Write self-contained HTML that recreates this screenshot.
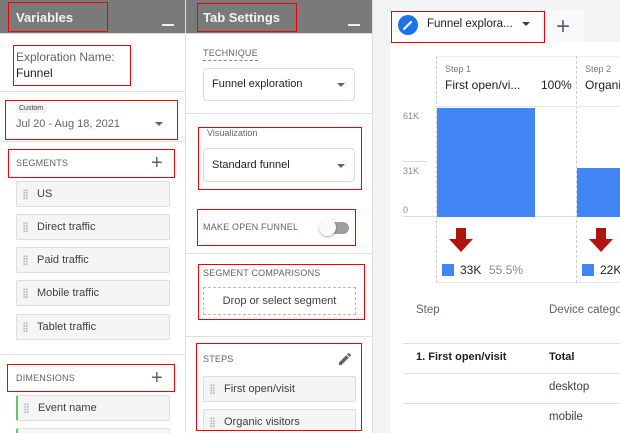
<!DOCTYPE html><html><head><style>
*{margin:0;padding:0;box-sizing:border-box}
html,body{width:620px;height:433px;overflow:hidden}
body{background:#fff;font-family:"Liberation Sans",Arial,sans-serif;position:relative;color:#202124}
.a{position:absolute}
.r{position:absolute;border:1.5px solid #e00}
.hd{background:#7a7a7a;height:34px;top:0;border-bottom:1px solid #ddd}
.ht{color:#f2f2f2;font-weight:bold;font-size:13px;top:10px}
.mn{width:12px;height:2px;background:#eee;top:24px}
.cap{font-size:9px;color:#5f6368;letter-spacing:.2px}
.div{height:1px;background:#e0e0e0}
.chip{position:absolute;background:#f5f5f5;border:1px solid #dedede;border-radius:2px;height:26px;font-size:11px;color:#3c4043;padding-left:20px;line-height:24px}
.chip:before{content:"";position:absolute;left:6px;top:7px;width:5px;height:11px;background:radial-gradient(circle,#bbb 0.9px,transparent 1.1px) 0 0/2.5px 2.6px}
.dd{position:absolute;border:1px solid #dadce0;border-radius:4px;font-size:11px;color:#202124;padding-left:8px}
.car{position:absolute;width:0;height:0;border-left:4px solid transparent;border-right:4px solid transparent;border-top:4px solid #5f6368}
.plus{position:absolute;font-size:20px;color:#5f6368;line-height:20px}
</style></head><body>
<div class="a hd" style="left:0;width:620px"></div>
<div class="a" style="left:185px;top:0;width:1px;height:433px;background:#e0e0e0"></div>
<div class="a" style="left:372px;top:0;width:1px;height:433px;background:#e0e0e0"></div>
<div class="a" style="left:373px;top:0;width:247px;height:433px;background:#f1f3f4"></div>
<div class="a" style="left:185px;top:0;width:1px;height:34px;background:#ddd"></div>
<div class="a ht" style="left:16px">Variables</div>
<div class="a mn" style="left:162px"></div>
<div class="r" style="left:8px;top:2px;width:100px;height:30px"></div>
<div class="a ht" style="left:203px">Tab Settings</div>
<div class="a mn" style="left:348px"></div>
<div class="r" style="left:197px;top:3px;width:100px;height:29px"></div>

<div class="a" style="left:16px;top:49px;font-size:12px;color:#5f6368;line-height:16px">Exploration Name:<br><span style="color:#202124">Funnel</span></div>
<div class="r" style="left:13px;top:45px;width:118px;height:41px"></div>
<div class="a div" style="left:0;top:91px;width:185px"></div>
<div class="a" style="left:16px;top:104px;font-size:7px;color:#3c4043;background:#f1f1f1;padding:1px 3px">Custom</div>
<div class="a" style="left:16px;top:118px;font-size:11px;color:#5f6368">Jul 20 - Aug 18, 2021</div>
<div class="car" style="left:155px;top:122px"></div>
<div class="r" style="left:5px;top:100px;width:173px;height:40px"></div>
<div class="a div" style="left:0;top:141px;width:185px"></div>
<div class="a cap" style="left:16px;top:158px">SEGMENTS</div>
<div class="plus" style="left:151px;top:153px">+</div>
<div class="r" style="left:8px;top:149px;width:167px;height:29px"></div>
<div class="chip" style="left:16px;top:181px;width:154px">US</div>
<div class="chip" style="left:16px;top:214px;width:154px">Direct traffic</div>
<div class="chip" style="left:16px;top:247px;width:154px">Paid traffic</div>
<div class="chip" style="left:16px;top:280px;width:154px">Mobile traffic</div>
<div class="chip" style="left:16px;top:314px;width:154px">Tablet traffic</div>
<div class="a div" style="left:0;top:354px;width:185px"></div>
<div class="a cap" style="left:16px;top:373px">DIMENSIONS</div>
<div class="plus" style="left:151px;top:368px">+</div>
<div class="r" style="left:7px;top:364px;width:168px;height:28px"></div>
<div class="chip" style="left:16px;top:395px;width:154px;border-left:2px solid #6ac06a">Event name</div>
<div class="chip" style="left:16px;top:428px;width:154px;border-left:2px solid #6ac06a"></div>

<div class="a cap" style="left:203px;top:48px;border-bottom:1px dashed #888;padding-bottom:2px">TECHNIQUE</div>
<div class="dd" style="left:203px;top:68px;width:152px;height:33px;line-height:31px">Funnel exploration</div>
<div class="car" style="left:337px;top:83px"></div>
<div class="a div" style="left:186px;top:113px;width:186px"></div>
<div class="a" style="left:207px;top:128px;font-size:9px;color:#5f6368">Visualization</div>
<div class="dd" style="left:203px;top:148px;width:152px;height:34px;line-height:32px">Standard funnel</div>
<div class="car" style="left:337px;top:164px"></div>
<div class="r" style="left:198px;top:127px;width:164px;height:63px"></div>
<div class="a cap" style="left:203px;top:222px">MAKE OPEN FUNNEL</div>
<div class="a" style="left:322px;top:222px;width:27px;height:12px;border-radius:6px;background:#9e9e9e"></div>
<div class="a" style="left:319px;top:219px;width:17px;height:17px;border-radius:50%;background:#fafafa;box-shadow:0 1px 2px rgba(0,0,0,.35)"></div>
<div class="r" style="left:197px;top:209px;width:159px;height:37px"></div>
<div class="a div" style="left:186px;top:253px;width:186px"></div>
<div class="a cap" style="left:203px;top:268px">SEGMENT COMPARISONS</div>
<div class="a" style="left:203px;top:287px;width:153px;height:28px;border:1px dashed #bbb;font-size:11px;color:#3c4043;text-align:center;line-height:26px">Drop or select segment</div>
<div class="r" style="left:198px;top:264px;width:167px;height:56px"></div>
<div class="a div" style="left:186px;top:336px;width:186px"></div>
<div class="a cap" style="left:203px;top:354px">STEPS</div>
<svg class="a" style="left:337px;top:351px" width="16" height="16" viewBox="0 0 24 24"><path d="M3 17.25V21h3.75L17.8 9.94l-3.75-3.75L3 17.25zM20.7 7.04a1 1 0 000-1.41l-2.34-2.34a1 1 0 00-1.41 0l-1.83 1.83 3.75 3.75 1.83-1.83z" fill="#5f6368"/></svg>
<div class="chip" style="left:203px;top:376px;width:153px">First open/visit</div>
<div class="chip" style="left:203px;top:409px;width:153px">Organic visitors</div>
<div class="r" style="left:196px;top:343px;width:166px;height:88px"></div>

<div class="a" style="left:390px;top:9px;width:152px;height:34px;background:#fff;border-radius:4px 4px 0 0"></div>
<div class="a" style="left:543px;top:9px;width:41px;height:34px;background:#f8f9fa;border-radius:4px 4px 0 0"></div>
<div class="a" style="left:390px;top:42px;width:230px;height:391px;background:#fff"></div>
<div class="a" style="left:398px;top:15px;width:20px;height:20px;border-radius:50%;background:#1a73e8"></div>
<svg class="a" style="left:402px;top:19px" width="12" height="12" viewBox="0 0 12 12"><path d="M2 10 L9 3" stroke="#fff" stroke-width="2.2" stroke-linecap="round"/></svg>
<div class="a" style="left:427px;top:18px;font-size:11.5px;color:#202124">Funnel explora...</div>
<div class="car" style="left:522px;top:22px;border-top-color:#3c4043"></div>
<div class="r" style="left:391px;top:11px;width:154px;height:32px"></div>
<div class="a" style="left:556px;top:13px;font-size:24px;color:#5f6368;font-weight:300">+</div>

<div class="a" style="left:436px;top:56px;width:184px;height:227px;border-left:1px dashed #ccc;border-bottom:1px solid #e6e6e6;border-top:1px solid #eee"></div>
<div class="a" style="left:576px;top:56px;width:1px;height:227px;border-left:1px dashed #ccc"></div>
<div class="a" style="left:445px;top:64px;font-size:9px;color:#777">Step 1</div>
<div class="a" style="left:445px;top:78px;font-size:12px">First open/vi...</div>
<div class="a" style="left:541px;top:78px;font-size:12px">100%</div>
<div class="a" style="left:585px;top:64px;font-size:9px;color:#777">Step 2</div>
<div class="a" style="left:585px;top:78px;font-size:12px">Organic</div>
<div class="a" style="left:436px;top:106px;width:184px;height:1px;background:#e6e6e6"></div>
<div class="a" style="left:403px;top:111px;font-size:9px;color:#888">61K</div>
<div class="a" style="left:403px;top:166px;font-size:9px;color:#888">31K</div>
<div class="a" style="left:403px;top:205px;font-size:9px;color:#888">0</div>
<div class="a" style="left:403px;top:161px;width:25px;height:1px;background:#ddd"></div>
<div class="a" style="left:403px;top:216px;width:217px;height:1px;background:#ddd"></div>
<div class="a" style="left:437px;top:108px;width:98px;height:109px;background:#4285f4"></div>
<div class="a" style="left:577px;top:168px;width:43px;height:49px;background:#4285f4"></div>
<svg class="a" style="left:449px;top:228px" width="24" height="24" viewBox="0 0 24 24"><path d="M7 0h10v11h7L12 24 0 11h7z" fill="#b0140f"/></svg>
<svg class="a" style="left:589px;top:228px" width="24" height="24" viewBox="0 0 24 24"><path d="M7 0h10v11h7L12 24 0 11h7z" fill="#b0140f"/></svg>
<div class="a" style="left:442px;top:264px;width:12px;height:12px;background:#4285f4"></div>
<div class="a" style="left:460px;top:263px;font-size:12px">33K</div>
<div class="a" style="left:489px;top:263px;font-size:12px;color:#888">55.5%</div>
<div class="a" style="left:582px;top:264px;width:12px;height:12px;background:#4285f4"></div>
<div class="a" style="left:600px;top:263px;font-size:12px">22K</div>

<div class="a" style="left:416px;top:304px;font-size:11.5px;color:#5f6368">Step</div>
<div class="a" style="left:549px;top:304px;font-size:11.5px;color:#5f6368;white-space:nowrap">Device catego</div>
<div class="a" style="left:403px;top:343px;width:217px;height:1px;background:#e0e0e0"></div>
<div class="a" style="left:416px;top:351px;font-size:11px;font-weight:bold">1. First open/visit</div>
<div class="a" style="left:549px;top:351px;font-size:11px;font-weight:bold">Total</div>
<div class="a" style="left:403px;top:373px;width:217px;height:1px;background:#e0e0e0"></div>
<div class="a" style="left:549px;top:381px;font-size:11.5px;color:#3c4043">desktop</div>
<div class="a" style="left:403px;top:403px;width:217px;height:1px;background:#e0e0e0"></div>
<div class="a" style="left:549px;top:411px;font-size:11.5px;color:#3c4043">mobile</div>
</body></html>
